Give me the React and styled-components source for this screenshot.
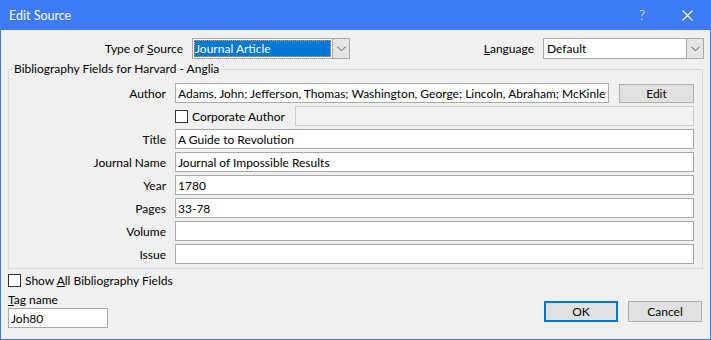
import React from "react";
import styled, { createGlobalStyle } from "styled-components";

const GlobalStyle = createGlobalStyle`
  html, body {
    margin: 0;
    padding: 0;
    background: #f0f0f0;
  }
  body {
    font-family: Lato, "Noto Sans", sans-serif;
    font-size: 12px;
    color: #000;
  }
`;

const fields = [
  { label: "Title", value: "A Guide to Revolution" },
  { label: "Journal Name", value: "Journal of Impossible Results" },
  { label: "Year", value: "1780" },
  { label: "Pages", value: "33-78" },
  { label: "Volume", value: "" },
  { label: "Issue", value: "" },
];

const Chevron = () => (
  <svg width="9" height="6" viewBox="0 0 9 6">
    <path d="M0.5 0.8 L4.5 4.8 L8.5 0.8" fill="none" stroke="#555" strokeWidth="1" />
  </svg>
);

const CloseIcon = () => (
  <svg width="11" height="11" viewBox="0 0 11 11">
    <path d="M0.5 0.5 L10.5 10.5 M10.5 0.5 L0.5 10.5" stroke="#fff" strokeWidth="1.1" />
  </svg>
);

const App = () => {
  return (
    <>
      <GlobalStyle />
      <Window>
        <TitleBar>
          <Caption>Edit Source</Caption>
          <TitleButtons>
            <HelpGlyph>?</HelpGlyph>
            <CloseIcon />
          </TitleButtons>
        </TitleBar>

        <Body>
          <TopRow>
            <TopLabel $width={176}>
              Type of <u>S</u>ource
            </TopLabel>
            <Combo $width={158}>
              <ComboText $selected>
                <Highlight>Journal Article</Highlight>
              </ComboText>
              <ComboArrow>
                <Chevron />
              </ComboArrow>
            </Combo>
            <Spacer />
            <TopLabel>
              <u>L</u>anguage
            </TopLabel>
            <Combo $width={161}>
              <ComboText>Default</ComboText>
              <ComboArrow>
                <Chevron />
              </ComboArrow>
            </Combo>
          </TopRow>

          <GroupBox>
            <Legend>Bibliography Fields for Harvard - Anglia</Legend>
            <FieldGrid>
              <FieldLabel>Author</FieldLabel>
              <InlineRow>
                <TextBox
                  readOnly
                  value="Adams, John; Jefferson, Thomas; Washington, George; Lincoln, Abraham; McKinley, William"
                />
                <Button $width={75} $height={19}>Edit</Button>
              </InlineRow>

              <span />
              <InlineRow>
                <CheckLabel $width={110}>
                  <CheckBox />
                  <span>Corporate Author</span>
                </CheckLabel>
                <TextBox disabled value="" />
              </InlineRow>

              {fields.map((f) => (
                <React.Fragment key={f.label}>
                  <FieldLabel>{f.label}</FieldLabel>
                  <TextBox readOnly value={f.value} />
                </React.Fragment>
              ))}
            </FieldGrid>
          </GroupBox>

          <Footer>
            <FooterLeft>
              <CheckLabel>
                <CheckBox />
                <span>
                  Show <u>A</u>ll Bibliography Fields
                </span>
              </CheckLabel>
              <TagLabel>
                <u>T</u>ag name
              </TagLabel>
              <TagBox readOnly value="Joh80" />
            </FooterLeft>
            <ButtonRow>
              <Button $width={74} $height={21} $default>
                OK
              </Button>
              <Button $width={74} $height={21}>
                Cancel
              </Button>
            </ButtonRow>
          </Footer>
        </Body>
      </Window>
    </>
  );
};

export default App;

const Window = styled.div`
  width: 711px;
  height: 340px;
  box-sizing: border-box;
  border: 1px solid #3c7af6;
  border-top: none;
  background: #f0f0f0;
  display: flex;
  flex-direction: column;
  overflow: hidden;
`;

const TitleBar = styled.div`
  height: 30px;
  margin: 0 -1px;
  background: #3c7af6;
  color: #fff;
  display: flex;
  align-items: center;
  justify-content: space-between;
  padding: 0 18px 0 9px;
  flex-shrink: 0;
`;

const Caption = styled.span`
  font-size: 12.5px;
`;

const TitleButtons = styled.div`
  display: flex;
  align-items: center;
  gap: 37px;
`;

const HelpGlyph = styled.span`
  font-size: 14px;
  font-weight: 300;
  line-height: 1;
`;

const Body = styled.div`
  flex: 1;
  display: flex;
  flex-direction: column;
  padding: 8px 6px 0 6px;
`;

const TopRow = styled.div`
  display: flex;
  align-items: center;
  height: 21px;
`;

const TopLabel = styled.span`
  width: ${(p) => (p.$width ? `${p.$width}px` : "auto")};
  text-align: right;
  margin-right: 9px;
  white-space: nowrap;
`;

const Spacer = styled.div`
  flex: 1;
`;

const Combo = styled.div`
  width: ${(p) => p.$width}px;
  height: 21px;
  box-sizing: border-box;
  border: 1px solid #a9a9a9;
  background: #fff;
  display: flex;
`;

const ComboText = styled.div`
  flex: 1;
  display: flex;
  align-items: center;
  padding: ${(p) => (p.$selected ? "1px" : "0 0 0 3px")};
`;

const Highlight = styled.div`
  flex: 1;
  align-self: stretch;
  display: flex;
  align-items: center;
  padding-left: 1px;
  background: #0078d7;
  color: #fff;
  outline: 1px dotted #e8a040;
  outline-offset: -1px;
`;

const ComboArrow = styled.div`
  width: 17px;
  box-sizing: border-box;
  border-left: 1px solid #a9a9a9;
  background: #e5e5e5;
  display: flex;
  align-items: center;
  justify-content: center;
`;

const GroupBox = styled.fieldset`
  margin: 2px 1px 0 1px;
  padding: 6px 8px 4px 0;
  border: 1px solid #dadada;
  min-width: 0;
`;

const Legend = styled.legend`
  margin-left: 4px;
  padding: 0 1px;
  line-height: 16px;
`;

const FieldGrid = styled.div`
  display: grid;
  grid-template-columns: 157px 1fr;
  column-gap: 9px;
  row-gap: 3px;
  grid-auto-rows: 20px;
  align-items: center;
`;

const FieldLabel = styled.span`
  text-align: right;
  white-space: nowrap;
`;

const InlineRow = styled.div`
  display: flex;
  align-items: center;
  gap: 10px;
  height: 20px;
  min-width: 0;
`;

const TextBox = styled.input`
  flex: 1;
  min-width: 0;
  height: 20px;
  box-sizing: border-box;
  border: 1px solid #a9a9a9;
  background: #fff;
  padding: 0 2px;
  font: inherit;
  color: #000;
  outline: none;

  &:disabled {
    background: #f2f2f2;
    border-color: #cccccc;
  }
`;

const Button = styled.button`
  width: ${(p) => p.$width}px;
  height: ${(p) => p.$height}px;
  box-sizing: border-box;
  flex-shrink: 0;
  border: ${(p) => (p.$default ? "2px solid #0078d7" : "1px solid #adadad")};
  background: #e1e1e1;
  font: inherit;
  color: #000;
  padding: 0;
`;

const CheckLabel = styled.label`
  display: flex;
  align-items: center;
  gap: 4px;
  flex-shrink: 0;
  width: ${(p) => (p.$width ? `${p.$width}px` : "auto")};
  white-space: nowrap;
`;

const CheckBox = styled.span`
  width: 13px;
  height: 13px;
  box-sizing: border-box;
  border: 1px solid #333;
  background: #fff;
  flex-shrink: 0;
`;

const Footer = styled.div`
  display: flex;
  justify-content: space-between;
  align-items: flex-end;
  padding: 4px 2px 0 1px;
`;

const FooterLeft = styled.div`
  display: flex;
  flex-direction: column;
  align-items: flex-start;
`;

const TagLabel = styled.span`
  margin-top: 4px;
  line-height: 16px;
`;

const TagBox = styled(TextBox)`
  flex: none;
  width: 100px;
`;

const ButtonRow = styled.div`
  display: flex;
  gap: 10px;
  margin-bottom: 6px;
`;
